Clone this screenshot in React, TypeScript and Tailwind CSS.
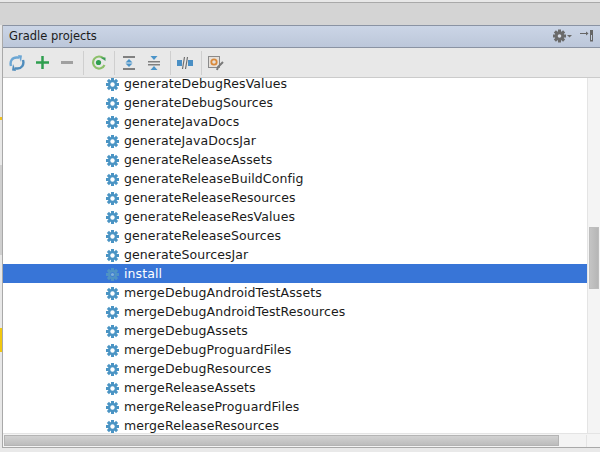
import React from "react";

const rowsTop = ["generateDebugResValues","generateDebugSources","generateJavaDocs","generateJavaDocsJar","generateReleaseAssets","generateReleaseBuildConfig","generateReleaseResources","generateReleaseResValues","generateReleaseSources","generateSourcesJar","install","mergeDebugAndroidTestAssets","mergeDebugAndroidTestResources","mergeDebugAssets","mergeDebugProguardFiles","mergeDebugResources","mergeReleaseAssets","mergeReleaseProguardFiles","mergeReleaseResources"];

function Gear({ dim }: { dim?: boolean }) {
  const teeth = [0, 45, 90, 135, 180, 225, 270, 315];
  const c = dim ? "#4f93c4" : "#4a94c4";
  return (
    <svg width="13" height="13" viewBox="0 0 13 13" className="shrink-0">
      {teeth.map((a) => (
        <rect key={a} x="5" y="0" width="3" height="3" fill={c} transform={`rotate(${a} 6.5 6.5)`} />
      ))}
      <circle cx="6.5" cy="6.5" r="3.4" fill="none" stroke={c} strokeWidth="2.4" />
      <circle cx="6.5" cy="6.5" r="1.6" fill={dim ? "#7fb0d8" : "#ffffff"} />
    </svg>
  );
}

function Sep() {
  return <div className="w-px h-[24px] bg-[#cfcfcf] shrink-0" />;
}

export default function App() {
  return (
    <div className="w-[600px] h-[452px] overflow-hidden flex flex-col bg-[#e9e9e9] font-['DejaVu_Sans',sans-serif]">
      <div className="h-[2px] bg-[#e8e8e8] shrink-0" />
      <div className="h-[1px] bg-[#a9a9a9] shrink-0" />
      <div className="h-[22px] bg-[#d4d4d4] shrink-0" />
      <div className="flex h-[423px] shrink-0">
        <div className="w-[2px] flex flex-col bg-[#e8e8e8]">
          <div className="h-[92px]" />
          <div className="h-[3px] bg-[#f0c020]" />
          <div className="h-[45px]" />
          <div className="h-[90px] bg-[#cfcfcf]" />
          <div className="h-[73px]" />
          <div className="h-[24px] bg-[#f2c80f]" />
        </div>
        <div className="w-[1px] bg-[#a9a9a9]" />
        <div className="flex-1 flex flex-col min-w-0">
          <div className="h-[23px] shrink-0 flex items-center border-y border-y-[#8a93a3] bg-gradient-to-b from-[#cbd5e6] to-[#bcc7da] pl-[6px] pr-[7px]">
            <span className="text-[11.500px] text-[#1c1c1c]">Gradle projects</span>
            <div className="flex-1" />
            <svg width="20" height="14" viewBox="0 0 20 14" className="-mt-[2px]">
              <g fill="#6a6a6a">
                {[0, 45, 90, 135].map((a) => (
                  <rect key={a} x="0" y="5.5" width="13" height="3" transform={`rotate(${a} 6.5 7)`} />
                ))}
                <circle cx="6.5" cy="7" r="4.7" />
                <path d="M14 6h5l-2.5 2.5z" />
              </g>
              <circle cx="6.5" cy="7" r="1.8" fill="#d8dde8" />
            </svg>
            <svg width="13" height="12" viewBox="0 0 13 12" className="ml-[7px] -mt-[2px]">
              <path d="M0 3.5h7" stroke="#666" strokeWidth="1" />
              <path d="M6 1.5l2.5 2-2.5 2z" fill="#666" />
              <rect x="10.5" y="0.5" width="2" height="10.5" fill="none" stroke="#666" />
              <rect x="10" y="0" width="3" height="5" fill="#666" />
            </svg>
          </div>
          <div className="h-[30px] shrink-0 flex items-center bg-[#e8e8e8] border-b border-b-[#cbcbcb]">
            <svg width="16" height="16" viewBox="0 0 16 16" className="ml-[6px]">
              <path d="M2 11C0.500 6 3.500 2.500 7.500 2.500l2.500 0" fill="none" stroke="#6ba6d4" strokeWidth="2.400" />
              <path d="M14 5C15.500 10 12.500 13.500 8.500 13.500l-2.500 0" fill="none" stroke="#4f8cbc" strokeWidth="2.400" />
              <path d="M9 0l4 0.500-1 6.500z" fill="#6ba6d4" />
              <path d="M7 16l-4-0.500 1-6.500z" fill="#4f8cbc" />
            </svg>
            <svg width="13" height="13" viewBox="0 0 13 13" className="ml-[11px]">
              <path d="M5.250 0h2.500v5.250H13v2.500H7.750V13h-2.500V7.750H0v-2.500h5.250z" fill="#2f9e4f" />
            </svg>
            <div className="ml-[12px] w-[12px] h-[3px] bg-[#a0a0a0]" />
            <div className="ml-[10px]"><Sep /></div>
            <svg width="15" height="15" viewBox="0 0 15 15" className="ml-[7px]">
              <path d="M12.500 3.500A6 6 0 1 0 13.500 10" fill="none" stroke="#8cc06a" strokeWidth="2.200" />
              <circle cx="7.500" cy="7.500" r="2.600" fill="#2f9e4f" />
              <path d="M9.500 2.500l5 0 0 3.500z" fill="#3c9e58" />
            </svg>
            <div className="ml-[8px]"><Sep /></div>
            <svg width="14" height="14" viewBox="0 0 14 14" className="ml-[7px]">
              <rect x="1" y="0" width="12" height="2" fill="#808080" />
              <rect x="1" y="12" width="12" height="2" fill="#808080" />
              <path d="M7 3l3.500 3.500h-7z" fill="#4a94c9" />
              <path d="M7 11L3.500 7.500h7z" fill="#4a94c9" />
            </svg>
            <svg width="14" height="14" viewBox="0 0 14 14" className="ml-[11px]">
              <rect x="1" y="5" width="12" height="1.500" fill="#808080" />
              <rect x="1" y="8" width="12" height="1.500" fill="#808080" />
              <path d="M7 4L3.500 0h7z" fill="#4a94c9" />
              <path d="M7 10l3.500 4h-7z" fill="#4a94c9" />
            </svg>
            <div className="ml-[9px]"><Sep /></div>
            <svg width="16" height="14" viewBox="0 0 16 14" className="ml-[6px]">
              <rect x="0" y="4" width="5" height="6" fill="#4a8fc4" />
              <rect x="11" y="4" width="5" height="6" fill="#4a8fc4" />
              <path d="M7.500 1L5.500 13M10.500 1L8.500 13" stroke="#707070" strokeWidth="1.200" />
            </svg>
            <div className="ml-[8px]"><Sep /></div>
            <svg width="16" height="16" viewBox="0 0 16 16" className="ml-[6px]">
              <rect x="0.500" y="1.500" width="11" height="11" fill="#e6e0da" stroke="#8a8a8a" />
              <circle cx="6" cy="7" r="2.700" fill="none" stroke="#d98a3c" strokeWidth="1.800" />
              <path d="M15 7l-5 5-1 3" fill="none" stroke="#7a7a7a" strokeWidth="2" />
            </svg>
          </div>
          <div className="flex-1 flex min-h-0 bg-white">
            <div className="flex-1 min-w-0 overflow-hidden">
              <div className="-mt-[4px]">
                {rowsTop.map((r) => {
                  const sel = r === "install";
                  return (
                    <div key={r} className={`h-[19px] pt-[2px] flex items-center pl-[103px] gap-[5px] text-[12.500px] tracking-[0.1px] whitespace-nowrap ${sel ? "bg-[#3875d7] text-white" : "text-[#1a1a1a]"}`}>
                      <Gear dim={sel} />
                      <span>{r}</span>
                    </div>
                  );
                })}
              </div>
            </div>
            <div className="w-[13px] shrink-0 bg-[#f4f4f4] border-l border-l-[#e4e4e4] pl-[1px] pr-[1px] pt-[149px]">
              <div className="h-[62px] bg-gradient-to-r from-[#c4c4c4] to-[#b6b6b6] border border-[#bdbdbd]" />
            </div>
          </div>
          <div className="h-[14px] shrink-0 bg-[#f4f4f4] border-t border-t-[#e4e4e4] pt-[1px] pl-[1px] flex">
            <div className="w-[555px] h-[11px] bg-gradient-to-b from-[#d2d2d2] to-[#bcbcbc] border border-[#b4b4b4]" />
            <div className="w-[27px]" />
            <div className="w-px h-full bg-[#e4e4e4]" />
          </div>
          <div className="h-[1px] shrink-0 bg-[#a9a9a9]" />
        </div>
      </div>
    </div>
  );
}
